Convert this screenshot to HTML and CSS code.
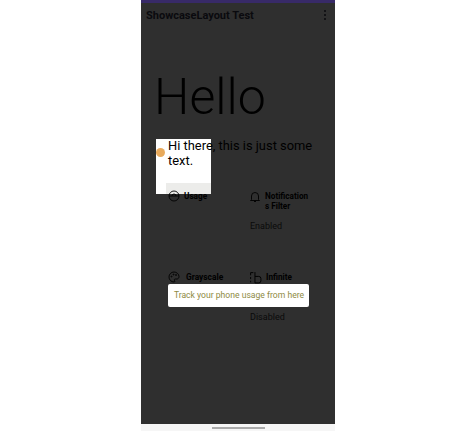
FILE: index.html
```html
<!DOCTYPE html>
<html lang="en">
<head>
    <meta charset="UTF-8">
    <meta name="viewport" content="width=device-width, initial-scale=1.0">
    <title>ShowcaseLayout Test</title>
    <link rel="stylesheet" href="styles.css">
</head>
<body>
    <div class="phone">
        <div class="screen">
            <div class="status-bar"></div>
            <div class="app-bar">
                <span class="app-title">ShowcaseLayout Test</span>
                <svg class="more" width="4" height="12" viewBox="0 0 4 12"><circle cx="2" cy="2" r="1"/><circle cx="2" cy="6" r="1"/><circle cx="2" cy="10" r="1"/></svg>
            </div>
            <h1 class="hello">Hello</h1>
            <div class="spot">
                <div class="spot-strip"></div>
                <span class="spot-dot"></span>
            </div>
            <p class="intro">Hi there, this is just some text.</p>
            <div class="cards">
                <div class="card card-usage">
                    <div class="card-head">
                        <svg class="icon" width="12" height="12" viewBox="0 0 24 24"><circle cx="12" cy="12" r="10"/><path d="M2 12h20M8 12a4 4 0 0 1 8 0"/></svg>
                        <span class="card-name">Usage</span>
                    </div>
                </div>
                <div class="card card-notify">
                    <div class="card-head">
                        <svg class="icon" width="12" height="13" viewBox="0 0 24 24"><path d="M5 18V11a7 7 0 0 1 14 0v7l2 2H3zM10 22h4"/></svg>
                        <span class="card-name">Notification s Filter</span>
                    </div>
                    <div class="card-state">Enabled</div>
                </div>
                <div class="card card-gray">
                    <div class="card-head">
                        <svg class="icon" width="12" height="12" viewBox="0 0 24 24"><path d="M12 2a10 10 0 0 0 0 20c2 0 2-2 1-3-1-2 0-3 2-3h3c2 0 4-2 4-5 0-5-5-9-10-9z"/><circle cx="7" cy="11" r="1"/><circle cx="11" cy="7" r="1"/><circle cx="16" cy="8" r="1"/></svg>
                        <span class="card-name">Grayscale</span>
                    </div>
                </div>
                <div class="card card-infinite">
                    <div class="card-head">
                        <svg class="icon" width="13" height="13" viewBox="0 0 24 24"><path d="M3 3h5M3 3v5M3 11v4M3 18v3M11 2v20h7a4 4 0 0 0 4-4v-4a4 4 0 0 0-4-4h-7"/></svg>
                        <span class="card-name">Infinite</span>
                    </div>
                    <div class="card-state">Disabled</div>
                </div>
            </div>
            <div class="tip">Track your phone usage from here</div>
        </div>
        <div class="nav-bar"><span class="nav-handle"></span></div>
    </div>
</body>
</html>
```

FILE: styles.css
```css
body{
    margin: 0;
    background-color: #ffffff;
    font-family: Roboto, "Liberation Sans", sans-serif;
    color: #000000;
}
.phone{
    width: 194px;
    height: 431px;
    margin-left: 141px;
    display: flex;
    flex-direction: column;
}
.screen{
    position: relative;
    flex: 1;
    background-color: #2f2f2f;
}
.status-bar{
    height: 3px;
    background-color: #382a68;
}
.app-bar{
    display: flex;
    justify-content: space-between;
    align-items: center;
    height: 24px;
    padding: 0 8px 0 5px;
}
.app-title{
    font-size: 11px;
    font-weight: 700;
    color: #0a0a0e;
}
.more{
    fill: #0a0a0e;
}
.hello{
    margin: 40px 0 0 13px;
    font-size: 50px;
    line-height: 60px;
    font-weight: 300;
}
.intro{
    position: relative;
    margin: 0;
    padding: 11px 0 0 27px;
    font-size: 12.9px;
    line-height: 15px;
}
.spot{
    position: absolute;
    left: 15px;
    top: 139px;
    width: 55px;
    height: 55px;
    background-color: #ffffff;
}
.spot-strip{
    position: absolute;
    left: 10px;
    right: 0;
    bottom: 0;
    height: 11px;
    background-color: #ececea;
}
.spot-dot{
    position: absolute;
    left: 0;
    top: 9px;
    width: 9px;
    height: 9px;
    border-radius: 50%;
    background-color: #e8aa5c;
}
.cards{
    position: relative;
    display: grid;
    grid-template-columns: 81px 1fr;
    grid-template-rows: 81px 50px;
    margin-top: 22px;
    padding-left: 27px;
}
.card-head{
    display: flex;
    gap: 4px;
    align-items: flex-start;
}
.card-name{
    width: 46px;
    margin-top: 1px;
    font-size: 8.2px;
    font-weight: 700;
    line-height: 10px;
}
.card-gray .card-head{
    gap: 6px;
}
.card-gray .card-name{
    font-size: 8.4px;
}
.icon{
    flex: none;
    fill: none;
    stroke: #000000;
    stroke-width: 1.8;
}
.card-state{
    margin-top: 9px;
    margin-left: 1px;
    font-size: 9px;
    line-height: 12px;
    color: #0a0a0a;
}
.card-infinite .card-state{
    margin-top: 27px;
}
.tip{
    position: absolute;
    left: 27px;
    top: 284px;
    width: 141px;
    height: 23px;
    padding-left: 1px;
    box-sizing: border-box;
    border-radius: 2px;
    background-color: #ffffff;
    color: #8e8a43;
    font-size: 8.6px;
    line-height: 23px;
    text-align: center;
}
.nav-bar{
    height: 7px;
    display: flex;
    justify-content: center;
    align-items: center;
    background-color: #f6f6f6;
}
.nav-handle{
    width: 53px;
    height: 2px;
    background-color: #aaaaaa;
}
```
